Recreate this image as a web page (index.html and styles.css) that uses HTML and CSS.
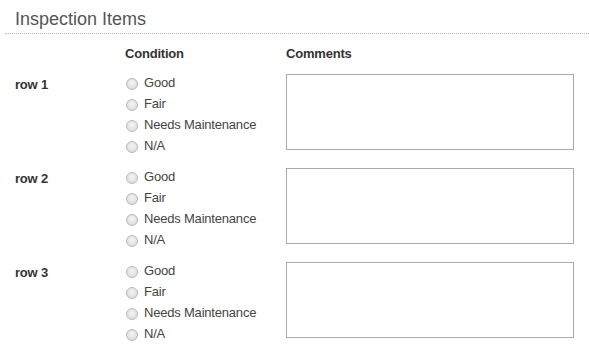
FILE: index.html
```html
<!DOCTYPE html>
<html>
<head>
<meta charset="utf-8">
<link rel="stylesheet" href="styles.css">
</head>
<body>
<div class="page">
  <h2 class="title">Inspection Items</h2>
  <div class="table">
    <div class="head-row">
      <div></div>
      <div>Condition</div>
      <div>Comments</div>
    </div>
    <div class="row">
      <div class="label">row 1</div>
      <div class="options">
        <label class="option"><input type="radio" name="r1">Good</label>
        <label class="option"><input type="radio" name="r1">Fair</label>
        <label class="option"><input type="radio" name="r1">Needs Maintenance</label>
        <label class="option"><input type="radio" name="r1">N/A</label>
      </div>
      <div class="comments"><textarea></textarea></div>
    </div>
    <div class="row">
      <div class="label">row 2</div>
      <div class="options">
        <label class="option"><input type="radio" name="r2">Good</label>
        <label class="option"><input type="radio" name="r2">Fair</label>
        <label class="option"><input type="radio" name="r2">Needs Maintenance</label>
        <label class="option"><input type="radio" name="r2">N/A</label>
      </div>
      <div class="comments"><textarea></textarea></div>
    </div>
    <div class="row">
      <div class="label">row 3</div>
      <div class="options">
        <label class="option"><input type="radio" name="r3">Good</label>
        <label class="option"><input type="radio" name="r3">Fair</label>
        <label class="option"><input type="radio" name="r3">Needs Maintenance</label>
        <label class="option"><input type="radio" name="r3">N/A</label>
      </div>
      <div class="comments"><textarea></textarea></div>
    </div>
  </div>
</div>
</body>
</html>
```
FILE: styles.css
```css
html, body {
  margin: 0;
  background: #fff;
}
body {
  font-family: "Liberation Sans", Arial, sans-serif;
  font-size: 13px;
  color: #333;
}
.page {
  padding: 9px 0 0 5px;
}
.title {
  margin: 0;
  font-size: 18px;
  font-weight: normal;
  line-height: 20px;
  color: #555;
  padding: 0 0 4px 10px;
  border-bottom: 1px dotted #bbb;
}
.table {
  padding: 12px 0 0 10px;
  letter-spacing: -0.2px;
}
.head-row {
  display: grid;
  grid-template-columns: 110px 161px 288px;
  line-height: 16px;
  font-weight: bold;
  margin-bottom: 10px;
}
.row {
  display: grid;
  grid-template-columns: 110px 161px 288px;
  margin-bottom: 10px;
}
.label {
  font-weight: bold;
  padding-top: 2px;
  line-height: 21px;
}
.options {
  display: flex;
  flex-direction: column;
}
.option {
  display: flex;
  align-items: center;
  height: 21px;
  color: #444;
}
.option input {
  -webkit-appearance: none;
  appearance: none;
  box-sizing: border-box;
  width: 12px;
  height: 12px;
  margin: 2px 6px 0 1px;
  border: 1px solid #b8b8b8;
  border-radius: 50%;
  background: radial-gradient(circle at 50% 40%, #f4f4f4 0%, #e2e2e2 60%, #d4d4d4 100%);
}
.comments textarea {
  display: block;
  box-sizing: border-box;
  width: 288px;
  height: 76px;
  margin: 2px 0 0 0;
  border: 1px solid #a9a9a9;
  resize: none;
  padding: 2px;
  background: #fff;
}
```
